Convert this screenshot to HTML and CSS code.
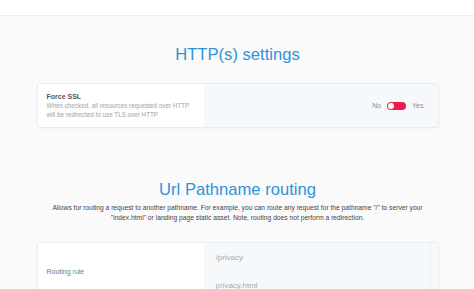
FILE: index.html
```html
<!DOCTYPE html>
<html lang="en">
<head>
    <meta charset="UTF-8">
    <meta name="viewport" content="width=device-width, initial-scale=1.0">
    <title>Settings</title>
    <link rel="stylesheet" href="styles.css">
</head>
<body>
    <div class="topbar"></div>
    <div class="container">
        <h1 class="title first">HTTP(s) settings</h1>
        <div class="card">
            <div class="card-left">
                <div class="label">Force SSL</div>
                <div class="hint">When checked, all resources requested over HTTP<br>will be redirected to use TLS over HTTP</div>
            </div>
            <div class="card-right toggle-row">
                <span class="opt">No</span>
                <span class="toggle"><span class="knob"></span></span>
                <span class="opt">Yes</span>
            </div>
        </div>

        <h1 class="title second">Url Pathname routing</h1>
        <p class="desc">Allows for routing a request to another pathname. For example, you can route any request for the pathname "/" to server your<br>"index.html" or landing page static asset. Note, routing does not perform a redirection.</p>
        <div class="card">
            <div class="card-left center">
                <div class="rule">Routing rule</div>
            </div>
            <div class="card-right fields">
                <input type="text" class="field" placeholder="/privacy">
                <input type="text" class="field" placeholder="privacy.html">
            </div>
        </div>
    </div>
</body>
</html>
```

FILE: styles.css
```css
* { margin: 0; padding: 0; box-sizing: border-box; }
body {
    font-family: 'Liberation Sans', Arial, sans-serif;
    background: #fbfafb;
    color: #555;
    overflow: hidden;
}
.topbar {
    height: 16px;
    background: white;
    border-bottom: 1px solid #ededed;
}
.container {
    width: 403px;
    margin: 0 auto;
    padding-left: 1px;
}
.title {
    font-weight: normal;
    font-size: 16.6px;
    line-height: 20px;
    color: #2f93d8;
    text-align: center;
}
.title.first { margin: 29px 0 18px; }
.title.second { margin: 52px 0 3px; }
.card {
    display: flex;
    background: white;
    border: 1px solid #ececec;
    border-radius: 3px;
    box-shadow: 0 1px 2px rgba(0, 0, 0, 0.03);
    min-height: 42px;
}
.card-left {
    width: 166px;
    padding: 8px 9px;
}
.card-left.center {
    display: flex;
    align-items: center;
}
.card-right {
    flex: 1;
    background: #f6f9fb;
}
.label {
    font-size: 7px;
    font-weight: bold;
    color: #555;
    line-height: 9px;
}
.hint {
    font-size: 6.3px;
    color: #a3a3a3;
    line-height: 9px;
}
.toggle-row {
    display: flex;
    align-items: center;
    justify-content: flex-end;
    padding-right: 14px;
    gap: 6px;
}
.opt { font-size: 7px; color: #8a8a8a; }
.toggle {
    position: relative;
    width: 19px;
    height: 8px;
    border-radius: 4px;
    background: #ee1c4c;
}
.knob {
    position: absolute;
    left: 1px;
    top: 1px;
    width: 6px;
    height: 6px;
    border-radius: 50%;
    background: white;
}
.desc {
    font-size: 6.7px;
    line-height: 10px;
    color: #444;
    text-align: center;
    margin: 0 -20px 19px;
}
.rule {
    font-size: 7px;
    color: #777;
}
.fields {
    display: flex;
    flex-direction: column;
    padding: 0 7px 0 0;
}
.field {
    height: 28px;
    border: none;
    background: transparent;
    padding: 0 12px;
    font-family: inherit;
    font-size: 8px;
    color: #999;
    border-right: 1px solid #eef1f3;
}
.field::placeholder { color: #ababab; font-weight: normal; }
```
